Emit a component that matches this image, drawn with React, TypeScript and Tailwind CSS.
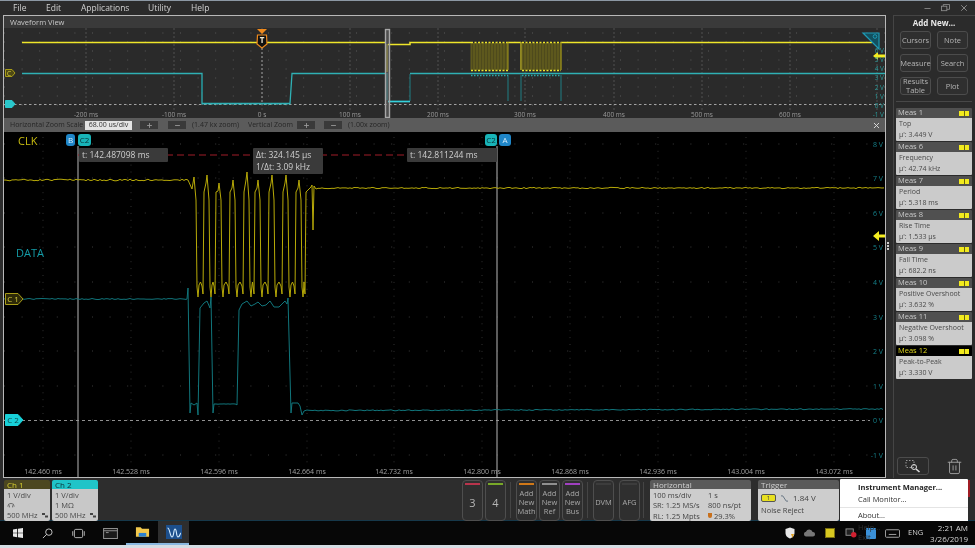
import { Minus, Plus, Trash2, X } from "lucide-react";

const noise = (i: number) => {
  const v = Math.sin(i * 12.9898) * 43758.5453;
  return v - Math.floor(v) - 0.5;
};

// noisy horizontal run, returned as path segments
function flat(x0: number, x1: number, y0: number, y1: number, amp: number, seed = 0) {
  let d = "";
  for (let x = x0; x <= x1; x += 2) {
    const y = y0 + ((y1 - y0) * (x - x0)) / (x1 - x0 || 1) + noise(x + seed) * amp;
    d += `L${x} ${y.toFixed(1)} `;
  }
  return d;
}

const peaks = [194, 207, 219, 233, 247, 258, 272, 286, 299];
const tops = [177, 175, 183, 180, 172, 180, 175, 175, 180];

function clockPath() {
  let d = "M4 180 " + flat(6, 186, 180, 180, 1.6, 3) + "L188 180 L192 189 ";
  peaks.forEach((p, i) => {
    const next = peaks[i + 1] ?? 309;
    d += `L${p} ${tops[i]} L${p + 2} 200 L${p + 3} 287 L${p + 4} 297 L${p + 5} 285 L${(p + next) / 2} 282 L${next - 5} 286 L${next - 4} 294 L${next - 3} 192 `;
    if (i < peaks.length - 1) d += `L${next - 1} ${tops[i + 1] + 8} `;
  });
  d += "L311 187 L312 185 L313 230 L314 186 L316 189 " + flat(318, 884, 188, 188, 1.2, 9);
  return d;
}

const dataPath =
  "M4 299 " +
  flat(6, 186, 299, 299, 1, 21) +
  "L187 299 L188 288 L190 413 L191 403 L194 405 L197 403 L198 415 L200 308 L204 303 L207 301 L210 308 L211 297 L213 413 L214 404 " +
  flat(216, 236, 404, 404, 1, 5) +
  "L237 405 L239 310 L242 304 L247 301 L251 306 L255 304 L258 302 L262 306 L266 305 L270 301 L274 307 L279 307 L285 301 L287 304 L288 298 L291 413 L292 403 L298 403 L300 406 L302 415 L304 411 L307 410 " +
  flat(309, 884, 410.5, 409, 1, 33);

const majorX = [43, 131, 219, 307, 394, 482, 570, 658, 746, 834];
const timeLabels = ["142.460 ms", "142.528 ms", "142.596 ms", "142.664 ms", "142.732 ms", "142.800 ms", "142.868 ms", "142.936 ms", "143.004 ms", "143.072 ms"];
const volts = [["8 V", 144], ["7 V", 178], ["6 V", 213], ["5 V", 247], ["4 V", 282], ["3 V", 317], ["2 V", 351], ["1 V", 386], ["0 V", 420], ["-1 V", 455]] as const;
const overviewX = [86, 174, 262, 350, 438, 525, 614, 702, 790, 877];
const overviewLabels = ["-200 ms", "-100 ms", "0 s", "100 ms", "200 ms", "300 ms", "400 ms", "500 ms", "600 ms"];
const overviewVolts = [["6 V", 50], ["5 V", 59], ["4 V", 68], ["3 V", 77], ["2 V", 87], ["1 V", 96], ["0 V", 105], ["-1 V", 114]] as const;

function range(from: number, to: number, step: number) {
  const out: number[] = [];
  for (let v = from; v <= to; v += step) out.push(v);
  return out;
}

function OverviewPlot() {
  return (
    <svg viewBox="4 28 881 90" className="block w-[881px] h-[90px] bg-[#2a2a2a]">
      {overviewX.map((x) => (
        <line key={x} x1={x} x2={x} y1={28} y2={112} stroke="#5a5a5a" strokeWidth="0.8" strokeDasharray="2 2" />
      ))}
      {range(33, 105, 9).map((y) => (
        <line key={y} x1={4} x2={885} y1={y} y2={y} stroke="#666" strokeWidth="0.8" strokeDasharray="1 16.6" />
      ))}
      <line x1={4} x2={885} y1={104.5} y2={104.5} stroke="#b0b0b0" strokeWidth="0.9" strokeDasharray="2.5 2.5" />
      {/* ch1 overview */}
      <path d="M22 42.5 H385 M388 44.5 H410 V42.5 H471 M508 42.5 H521 M561 42.5 H872" stroke="#efe62a" strokeWidth="1.5" fill="none" />
      <line x1={387} x2={387} y1={44} y2={72} stroke="#a89c18" strokeWidth="1" />
      <line x1={521} x2={521} y1={42} y2={70} stroke="#b5aa20" strokeWidth="1.5" />
      {[[471, 508], [522, 561]].map(([a, b]) => (
        <g key={a}>
          <rect x={a} y={43} width={b - a} height={27} fill="#4e4a1c" />
          {range(a, b, 3).map((x) => (
            <line key={x} x1={x} x2={x} y1={43} y2={70} stroke="#7c7420" strokeWidth="0.7" />
          ))}
          <line x1={a} x2={b} y1={42.5} y2={42.5} stroke="#efe62a" strokeWidth="1.5" strokeDasharray="2 1.5" />
          <line x1={a} x2={b} y1={70.5} y2={70.5} stroke="#efe62a" strokeWidth="1.5" strokeDasharray="2 1.5" />
          <line x1={b} x2={b} y1={42} y2={70} stroke="#a89c18" strokeWidth="1" />
        </g>
      ))}
      {/* ch2 overview */}
      <path d="M22 73.5 H202 V103.5 H290 L292 73.5 H385 M388 101.5 H410 M410 73.5 H885" stroke="#2fb0b4" strokeWidth="1.3" fill="none" />
      <path d="M202 80 V92 M387 73 V100 M410 74 V101 M508 75 V101 M521 75 V101 M561 75 V101" stroke="#1f7f84" strokeWidth="1" fill="none" />
      <path d="M388 101.5 H410" stroke="#34d0dc" strokeWidth="1.4" fill="none" />
      {[[471, 508], [522, 561]].map(([a, b]) => (
        <line key={a} x1={a} x2={b} y1={75.5} y2={75.5} stroke="#2aa9a9" strokeWidth="1.5" strokeDasharray="1.5 1.5" />
      ))}
      <line x1={202} x2={290} y1={104} y2={104} stroke="#2fb8bc" strokeWidth="1" strokeDasharray="1.5 1.5" />
      {/* zoom window */}
      <rect x={385.5} y={29.5} width={4} height={88} fill="#9a9a9a55" stroke="#a8a8a8" strokeWidth="1.4" />
      {/* trigger marker */}
      <line x1={262} x2={262} y1={48} y2={104} stroke="#aaa" strokeWidth="0.8" strokeDasharray="2 2" />
      <path d="M257 29 H267 L262 34 Z" fill="#f08a1c" />
      <path d="M257.5 35 H266.5 L267 44 L262 48 L257 44 Z" fill="#111" stroke="#f08a1c" strokeWidth="1.2" />
      <text x={262} y={43} textAnchor="middle" fontSize="8" fontWeight="700" fill="#f0e8d0">T</text>
      {/* channel tags */}
      <path d="M5.5 69.5 H12 L15 73 L12 76.5 H5.5 Z" fill="#4f4a14" stroke="#a89c18" />
      <text x={9} y={75.5} textAnchor="middle" fontSize="6.5" fill="#d8d040">C</text>
      <path d="M5.5 100.5 H12 L15 104 L12 107.5 H5.5 Z" fill="#2ac8cc" stroke="#2ac8cc" />
      {/* ref marker, arrow */}
      <path d="M863 33 H879 V49 Z" fill="#12505f" stroke="#1e9ab5" strokeWidth="1.2" />
      <circle cx={875} cy={36.5} r={1.8} fill="none" stroke="#1e9ab5" />
      <path d="M873 56 L878 52 V54.5 H885 V57.5 H878 V60 Z" fill="#f4ec20" />
      {overviewLabels.map((t, i) => (
        <text key={t} x={overviewX[i]} y={117} textAnchor="middle" fontSize="6.5" fill="#9a9a9a">{t}</text>
      ))}
      {overviewVolts.map(([t, y]) => (
        <text key={t} x={884} y={y + 2.5} textAnchor="end" fontSize="6.5" fill="#2a9a9a">{t}</text>
      ))}
    </svg>
  );
}

function MainPlot() {
  return (
    <svg viewBox="4 132 881 345" className="block w-[881px] h-[345px] bg-black">
      {majorX.map((x) => (
        <line key={x} x1={x} x2={x} y1={137} y2={465} stroke="#3c3c3c" strokeWidth="0.8" strokeDasharray="1 5.9" />
      ))}
      {volts.map(([, y]) => (
        <line key={y} x1={4} x2={870} y1={y} y2={y} stroke="#4a4a4a" strokeWidth="0.8" strokeDasharray="1 16.6" />
      ))}
      <line x1={4} x2={870} y1={420.5} y2={420.5} stroke="#b5b5b5" strokeWidth="0.8" strokeDasharray="3 3" />
      <line x1={78} x2={78} y1={146} y2={477} stroke="#9a9a9a" strokeWidth="1.2" />
      <line x1={497} x2={497} y1={146} y2={477} stroke="#9a9a9a" strokeWidth="1.2" />
      <line x1={78} x2={497} y1={155} y2={155} stroke="#a01c28" strokeWidth="1" strokeDasharray="7 4" />
      <path d={clockPath()} stroke="#b8aa08" strokeWidth="1" fill="none" />
      <path d={dataPath} stroke="#11767c" strokeWidth="1" fill="none" />
      <path d="M5.5 293.5 H18 L23 299 L18 304.5 H5.5 Z" fill="#2e2a08" stroke="#a89c18" />
      <text x={13} y={302} textAnchor="middle" fontSize="8" fill="#d8d040">C 1</text>
      <path d="M5.5 414.5 H18 L23 420 L18 425.5 H5.5 Z" fill="#18d0d8" stroke="#18d0d8" />
      <text x={13} y={423} textAnchor="middle" fontSize="8" fill="#0c4a50">C 2</text>
      <path d="M873 236 L879 231 V234.5 H885 V237.5 H879 V241 Z" fill="#f4ec20" />
      {timeLabels.map((t, i) => (
        <text key={t} x={majorX[i]} y={474} textAnchor="middle" fontSize="7" fill="#a0a0a0">{t}</text>
      ))}
      {volts.map(([t, y]) => (
        <text key={t} x={883} y={y + 2.5} textAnchor="end" fontSize="7" fill="#15808a">{t}</text>
      ))}
    </svg>
  );
}

function ZoomStep({ minus }: { minus?: boolean }) {
  const Icon = minus ? Minus : Plus;
  return (
    <div className="w-[18px] h-[8px] bg-[#3a3a3a] flex items-center justify-center">
      <Icon size={7} strokeWidth={3} className="text-[#999]" />
    </div>
  );
}

function ZoomBar() {
  return (
    <div className="h-[14px] bg-[#5b5b5b] flex items-center pl-[6px] pr-[3px] text-[7px] text-[#262626] whitespace-nowrap">
      <span className="w-[75px]">Horizontal Zoom Scale</span>
      <div className="w-[47px] h-[9px] bg-[#e4e4e4] text-[#333] flex items-center justify-center">68.00 us/div</div>
      <div className="ml-[8px]"><ZoomStep /></div>
      <div className="ml-[10px]"><ZoomStep minus /></div>
      <span className="ml-[6px] w-[56px]">(1.47 kx zoom)</span>
      <span className="w-[49px]">Vertical Zoom</span>
      <ZoomStep />
      <div className="ml-[9px]"><ZoomStep minus /></div>
      <span className="ml-[6px]">(1.00x zoom)</span>
      <X size={9} strokeWidth={2.5} className="ml-auto mr-[1px] text-[#ddd]" />
    </div>
  );
}

function Badge({ label, kind, className }: { label: string; kind: "blue" | "teal"; className: string }) {
  return (
    <div className={`absolute top-[2px] h-[12px] rounded-[3px] flex items-center justify-center text-[8px] ${kind === "blue" ? "bg-[#1f86c8] text-[#d8eefc]" : "bg-[#18b4b8] text-[#073238]"} ${className}`}>
      {label}
    </div>
  );
}

function Readout({ lines, className }: { lines: string[]; className: string }) {
  return (
    <div className={`absolute top-[16px] bg-[#3a3a3a] rounded-[1px] px-[3px] py-[1px] text-[#cfcfcf] text-[8.5px] leading-[12px] whitespace-nowrap ${className}`}>
      {lines.map((l) => <div key={l}>{l}</div>)}
    </div>
  );
}

function WaveformArea() {
  return (
    <div className="w-[883px] h-[463px] ml-[3px] border border-[#b8b8b8] flex flex-col">
      <div className="h-[12px] bg-[#3a3a3a] text-[#c8c8c8] text-[7.5px] leading-[12px] pl-[6px]">Waveform View</div>
      <OverviewPlot />
      <ZoomBar />
      <div className="relative">
        <MainPlot />
        <div className="absolute left-[14px] top-[1px] text-[#c8bc10] text-[11px]">CLK</div>
        <div className="absolute left-[12px] top-[113px] text-[#149ba6] text-[11px]">DATA</div>
        <Badge label="B" kind="blue" className="left-[62px] w-[9px]" />
        <Badge label="C2" kind="teal" className="left-[74px] w-[13px]" />
        <Badge label="C2" kind="teal" className="left-[481px] w-[12px]" />
        <Badge label="A" kind="blue" className="left-[495px] w-[12px]" />
        <Readout lines={["t: 142.487098 ms"]} className="left-[75px] w-[89px]" />
        <Readout lines={["Δt: 324.145 µs", "1/Δt: 3.09 kHz"]} className="left-[249px] w-[70px]" />
        <Readout lines={["t: 142.811244 ms"]} className="left-[403px] w-[90px]" />
      </div>
    </div>
  );
}

function SideButton({ children }: { children: React.ReactNode }) {
  return (
    <div className="h-[18px] rounded-[3px] border border-[#4c4c4c] bg-[#2f2f2f] text-[#b5b5b5] text-[7.5px] leading-[9px] flex items-center justify-center text-center">
      {children}
    </div>
  );
}

function MeasCard({ name, label, value, active }: { name: string; label: string; value: string; active?: boolean }) {
  return (
    <div className="w-[76px] rounded-[1px] overflow-hidden">
      <div className={`h-[10px] flex items-center justify-between pl-[2px] pr-[3px] text-[7.5px] ${active ? "bg-black text-[#dcd41c]" : "bg-[#505050] text-[#c8c8c8]"}`}>
        <span>{name}</span>
        <span className="w-[10px] h-[5px] bg-[#f2ea1e] flex justify-center"><span className="w-px bg-[#6a6410]" /></span>
      </div>
      <div className="h-[23px] bg-[#cbcbcb] text-[#4a4a4a] text-[7px] leading-[10.5px] pl-[3px] pt-[1px] whitespace-nowrap">
        <div>{label}</div>
        <div>µ': {value}</div>
      </div>
    </div>
  );
}

const meas = [
  { name: "Meas 1", label: "Top", value: "3.449 V" },
  { name: "Meas 6", label: "Frequency", value: "42.74 kHz" },
  { name: "Meas 7", label: "Period", value: "5.318 ms" },
  { name: "Meas 8", label: "Rise Time", value: "1.533 µs" },
  { name: "Meas 9", label: "Fall Time", value: "682.2 ns" },
  { name: "Meas 10", label: "Positive Overshoot", value: "3.632 %" },
  { name: "Meas 11", label: "Negative Overshoot", value: "3.098 %" },
  { name: "Meas 12", label: "Peak-to-Peak", value: "3.330 V", active: true },
];

function SidePanel() {
  return (
    <div className="relative w-[89px] h-[464px] flex flex-col pl-[10px] pr-[3px] bg-[#2b2b2b]">
      <div className="absolute left-[7px] top-0 bottom-[1px] right-0 border-l border-t border-[#454545]" />
      <div className="absolute left-[1px] top-[227px] flex flex-col gap-[1px]">
        <span className="w-[2px] h-[2px] bg-[#ccc]" />
        <span className="w-[2px] h-[2px] bg-[#ccc]" />
        <span className="w-[2px] h-[2px] bg-[#ccc]" />
      </div>
      <div className="relative flex flex-col flex-1">
        <div className="h-[17px] text-center text-[#e8e8e8] font-bold text-[8px] leading-[15px]">Add New...</div>
        <div className="grid grid-cols-2 gap-x-[6px] gap-y-[5px] pl-[4px] pr-[3px] mr-[1px] -mt-px">
          <SideButton>Cursors</SideButton>
          <SideButton>Note</SideButton>
          <SideButton>Measure</SideButton>
          <SideButton>Search</SideButton>
          <SideButton>Results<br />Table</SideButton>
          <SideButton>Plot</SideButton>
        </div>
        <div className="h-px bg-[#484848] mt-[6px] mb-[6px]" />
        <div className="flex flex-col gap-px">
          {meas.map((m) => <MeasCard key={m.name} {...m} />)}
        </div>
        <div className="mt-auto mb-[4px] flex items-center justify-between pl-[1px] pr-[9px]">
          <div className="w-[32px] h-[18px] rounded-[3px] border border-[#4c4c4c] flex items-center justify-center">
            <svg viewBox="0 0 20 14" className="w-[20px] h-[14px]" fill="none">
              <rect x="3" y="1.5" width="8" height="7" stroke="#999" strokeDasharray="1.5 1.5" />
              <circle cx="11" cy="8" r="2.5" stroke="#ddd" />
              <path d="M13 10 L16.5 13" stroke="#ddd" strokeWidth="1.6" />
            </svg>
          </div>
          <Trash2 size={17} strokeWidth={1.4} className="text-[#999]" />
        </div>
      </div>
    </div>
  );
}

function ChannelCard({ name, header, lines, icon }: { name: string; header: string; lines: string[]; icon?: boolean }) {
  return (
    <div className="w-[46px] h-[41px] rounded-[2px] overflow-hidden">
      <div className={`h-[9px] text-[8px] leading-[9px] pl-[3px] ${header}`}>{name}</div>
      <div className="relative h-[32px] bg-[#c8c8c8] text-[#4a4a4a] text-[7.5px] leading-[10px] pl-[3px] pt-px whitespace-nowrap">
        <div>{lines[0]}</div>
        {icon ? (
          <svg viewBox="0 0 10 8" className="w-[8px] h-[10px]" fill="none" stroke="#555">
            <path d="M1 6 A4 4 0 0 1 9 6" />
            <path d="M3 7 V4.5 M7 7 V4.5" />
          </svg>
        ) : (
          <div>{lines[1]}</div>
        )}
        <div>500 MHz</div>
        <svg viewBox="0 0 6 5" className="absolute right-[2px] bottom-[3px] w-[6px] h-[5px]" fill="#444">
          <rect x="0" y="0" width="3" height="2" />
          <rect x="3" y="2.5" width="3" height="2" />
        </svg>
      </div>
    </div>
  );
}

function BarButton({ stripe, className, children }: { stripe: string; className: string; children: React.ReactNode }) {
  return (
    <div className={`h-[41px] rounded-[4px] border border-[#4e4e4e] bg-[#2f2f2f] flex flex-col items-center text-[#a8a8a8] text-[7.5px] leading-[9px] text-center ${className}`}>
      <div className={`w-[15px] h-[2px] mt-[2px] shrink-0 ${stripe}`} />
      <div className="flex-1 flex items-center justify-center">{children}</div>
    </div>
  );
}

function BottomBar() {
  return (
    <div className="relative h-[42px] bg-[#2d2d2d] flex pl-[4px] pt-px border-b border-[#16384a]">
      <div className="flex gap-[2px]">
        <ChannelCard name="Ch 1" header="bg-[#4c4720] text-[#d8d030]" lines={["1 V/div"]} icon />
        <ChannelCard name="Ch 2" header="bg-[#20c4c8] text-[#0c3034]" lines={["1 V/div", "1 MΩ"]} />
      </div>
      <div className="flex gap-[2px] ml-[364px]">
        <BarButton stripe="bg-[#b8344c]" className="w-[21px]"><span className="text-[11px] text-[#b5b5b5]">3</span></BarButton>
        <BarButton stripe="bg-[#78a828]" className="w-[21px]"><span className="text-[11px] text-[#b5b5b5]">4</span></BarButton>
      </div>
      <div className="w-px h-[36px] mt-[2px] bg-[#454545] ml-[4px]" />
      <div className="flex gap-[2px] ml-[5px]">
        <BarButton stripe="bg-[#d07818]" className="w-[21px]">Add<br />New<br />Math</BarButton>
        <BarButton stripe="bg-[#909090]" className="w-[21px]">Add<br />New<br />Ref</BarButton>
        <BarButton stripe="bg-[#a040c0]" className="w-[21px]">Add<br />New<br />Bus</BarButton>
      </div>
      <div className="w-px h-[36px] mt-[2px] bg-[#454545] ml-[4px]" />
      <div className="flex gap-[5px] ml-[5px]">
        <BarButton stripe="bg-[#3c3c3c]" className="w-[21px]">DVM</BarButton>
        <BarButton stripe="bg-[#3c3c3c]" className="w-[21px]">AFG</BarButton>
      </div>
      <div className="w-px h-[36px] mt-[2px] bg-[#454545] ml-[3px]" />
      <div className="w-[101px] h-[41px] ml-[6px] rounded-[2px] overflow-hidden">
        <div className="h-[9px] bg-[#5a5a5a] text-[#d0d0d0] text-[8px] leading-[9px] pl-[3px]">Horizontal</div>
        <div className="h-[32px] bg-[#cdcdcd] text-[#444] text-[7.5px] leading-[10px] pl-[3px] pt-px grid grid-cols-[55px_1fr] whitespace-nowrap">
          <span>100 ms/div</span><span>1 s</span>
          <span>SR: 1.25 MS/s</span><span>800 ns/pt</span>
          <span>RL: 1.25 Mpts</span>
          <span className="flex items-center gap-[2px]"><span className="w-[4px] h-[5px] bg-[#c8701c] rounded-b-[2px]" />29.3%</span>
        </div>
      </div>
      <div className="w-[81px] h-[41px] ml-[7px] rounded-[2px] overflow-hidden">
        <div className="h-[9px] bg-[#5a5a5a] text-[#d0d0d0] text-[8px] leading-[9px] pl-[3px]">Trigger</div>
        <div className="h-[32px] bg-[#cdcdcd] text-[#444] text-[7.5px] leading-[10px] pl-[3px] pt-[4px]">
          <div className="flex items-center">
            <span className="w-[15px] h-[8px] rounded-[2px] bg-[#e8e020] border border-[#555] text-[6px] leading-[6px] text-center">1</span>
            <svg viewBox="0 0 10 8" className="w-[9px] h-[7px] ml-[4px]" fill="none" stroke="#5a6a7a"><path d="M1 1 H3 L7 7 H9" /></svg>
            <span className="ml-[4px] text-[8px]">1.84 V</span>
          </div>
          <div className="mt-[2px]">Noise Reject</div>
        </div>
      </div>
    </div>
  );
}

function PopupMenu() {
  return (
    <div className="absolute left-[840px] top-[479px] w-[128px]">
      <div className="h-[42px] bg-white rounded-t-[1px] pl-[18px] text-[7.5px] text-[#333]">
        <div className="pt-[3px] leading-[10px] font-bold text-[#222]">Instrument Manager...</div>
        <div className="pt-[2px] leading-[10px]">Call Monitor...</div>
        <div className="h-px bg-[#e4e4e4] mt-[3px] -ml-[18px]" />
        <div className="pt-[2px] leading-[10px]">About...</div>
      </div>
      {/* menu entries cut off behind the taskbar, only just readable */}
      <div className="pl-[18px] text-[7.5px] leading-[10px] text-[#2e2e2e]">
        <div className="pt-[1px]">Help...</div>
        <div>Exit</div>
      </div>
      <div className="absolute left-[128px] top-[1px] w-[2px] h-[17px] bg-[#a01c24]" />
    </div>
  );
}

function Taskbar() {
  return (
    <div className="h-[24px] bg-[#070707] flex items-center text-[#d4d4d4] relative">
      <div className="w-[32px] flex justify-center pl-[3px]">
        <svg viewBox="0 0 12 12" className="w-[10px] h-[10px]" fill="#e8e8e8">
          <path d="M0 1.8 L5 1 V5.6 H0 Z M6 .9 L12 0 V5.6 H6 Z M0 6.4 H5 V11 L0 10.2 Z M6 6.4 H12 V12 L6 11.1 Z" />
        </svg>
      </div>
      <div className="w-[31px] flex justify-center">
        <svg viewBox="0 0 12 12" className="w-[11px] h-[11px]" fill="none" stroke="#cfcfcf"><circle cx="7.5" cy="4.5" r="3.5" /><path d="M5 7 L1 11" /></svg>
      </div>
      <div className="w-[31px] flex justify-center">
        <svg viewBox="0 0 14 12" className="w-[13px] h-[11px]" fill="none" stroke="#bdbdbd"><rect x="2.5" y="1.5" width="9" height="9" rx="1.5" /><path d="M.7 3.5 V8.5 M13.3 3.5 V8.5" /></svg>
      </div>
      <div className="w-[32px] flex justify-center">
        <svg viewBox="0 0 16 12" className="w-[15px] h-[11px]" fill="#1a1a1a" stroke="#9a9a9a"><rect x=".5" y=".5" width="15" height="11" /><path d="M.5 3 H15.5 M3 5 H6" /></svg>
      </div>
      <div className="w-[32px] h-[24px] flex justify-center items-center border-b-2 border-[#8ab8e0]">
        <svg viewBox="0 0 16 12" className="w-[15px] h-[12px]">
          <path d="M1 1 H6 L7.5 2.5 H15 V11 H1 Z" fill="#f2c84c" />
          <rect x="4" y="7" width="8" height="4" fill="#2a80d0" />
        </svg>
      </div>
      <div className="w-[31px] h-[24px] flex justify-center items-center bg-[#2e2e2e] border-b-2 border-[#8ab8e0]">
        <svg viewBox="0 0 16 14" className="w-[16px] h-[14px]">
          <rect width="16" height="14" fill="#1c4f8c" />
          <path d="M1.5 3 C4 3 4 12 6 12 C8 12 7.5 4 9 4 C11 4 10 12 12 12 C14 12 14 8 15 8" stroke="#d4ecff" strokeWidth="1.1" fill="none" />
        </svg>
      </div>
      <div className="ml-[596px] flex items-center w-[60px]">
        <svg viewBox="0 0 10 12" className="w-[10px] h-[12px]">
          <path d="M5 .5 L9.5 2 V6 C9.5 9 7 11 5 11.5 C3 11 .5 9 .5 6 V2 Z" fill="#e8e8e8" />
          <path d="M6 7 L9 7 L7.5 11 Z" fill="#e0a020" />
        </svg>
        <svg viewBox="0 0 14 9" className="w-[13px] h-[8px] ml-[8px]" fill="#777"><path d="M3 8.5 A2.8 2.8 0 0 1 3 3 A4 4 0 0 1 10.5 3.5 A2.5 2.5 0 0 1 11 8.5 Z" /></svg>
        <div className="w-[10px] h-[10px] ml-[9px] bg-[#d8c820] border border-[#7a7010] shrink-0" />
      </div>
      <div className="flex items-center">
        <svg viewBox="0 0 13 11" className="w-[12px] h-[10px]">
          <rect x="1" y="1" width="8" height="7" fill="#222" stroke="#999" />
          <circle cx="9.5" cy="7.5" r="3" fill="#d02030" />
        </svg>
        <div className="w-[10px] h-[11px] ml-[9px] bg-[#3a90d8] rounded-[1px]" />
        <svg viewBox="0 0 16 9" className="w-[15px] h-[9px] ml-[9px]" fill="none" stroke="#aaa"><rect x=".5" y=".5" width="15" height="8" rx="1" /><path d="M4 5.5 H12" /></svg>
      </div>
      <span className="ml-[8px] text-[7.5px]">ENG</span>
      <div className="ml-auto pr-[7px] text-[8px] leading-[11px] text-right whitespace-nowrap">
        <div>2:21 AM</div>
        <div>3/26/2019</div>
      </div>
    </div>
  );
}

export default function App() {
  return (
    <div className="relative w-[975px] h-[548px] overflow-hidden bg-[#2d2d2d] font-['Open_Sans',sans-serif] blur-[0.35px]">
      <div className="h-px bg-[#8c98a4]" />
      <div className="h-[14px] bg-[#2b2b2b] flex items-center pl-[13px] text-[8.5px] text-[#d0d0d0]">
        <span className="w-[33px]">File</span>
        <span className="w-[35px]">Edit</span>
        <span className="w-[67px]">Applications</span>
        <span className="w-[43px]">Utility</span>
        <span>Help</span>
        <div className="ml-auto flex items-center gap-[9px] pr-[6px] text-[#9a9a9a]">
          <Minus size={9} strokeWidth={2} />
          <svg viewBox="0 0 10 9" className="w-[9px] h-[8px]" fill="none" stroke="#8a8a8a"><rect x=".5" y="2.5" width="6" height="5" /><path d="M2.5 2.5 V.5 H9.5 V6 H6.5" /></svg>
          <X size={10} strokeWidth={2} />
        </div>
      </div>
      <div className="flex h-[464px]">
        <WaveformArea />
        <SidePanel />
      </div>
      <BottomBar />
      <Taskbar />
      <div className="h-[3px] bg-[#d5dde4]" />
      <PopupMenu />
    </div>
  );
}
